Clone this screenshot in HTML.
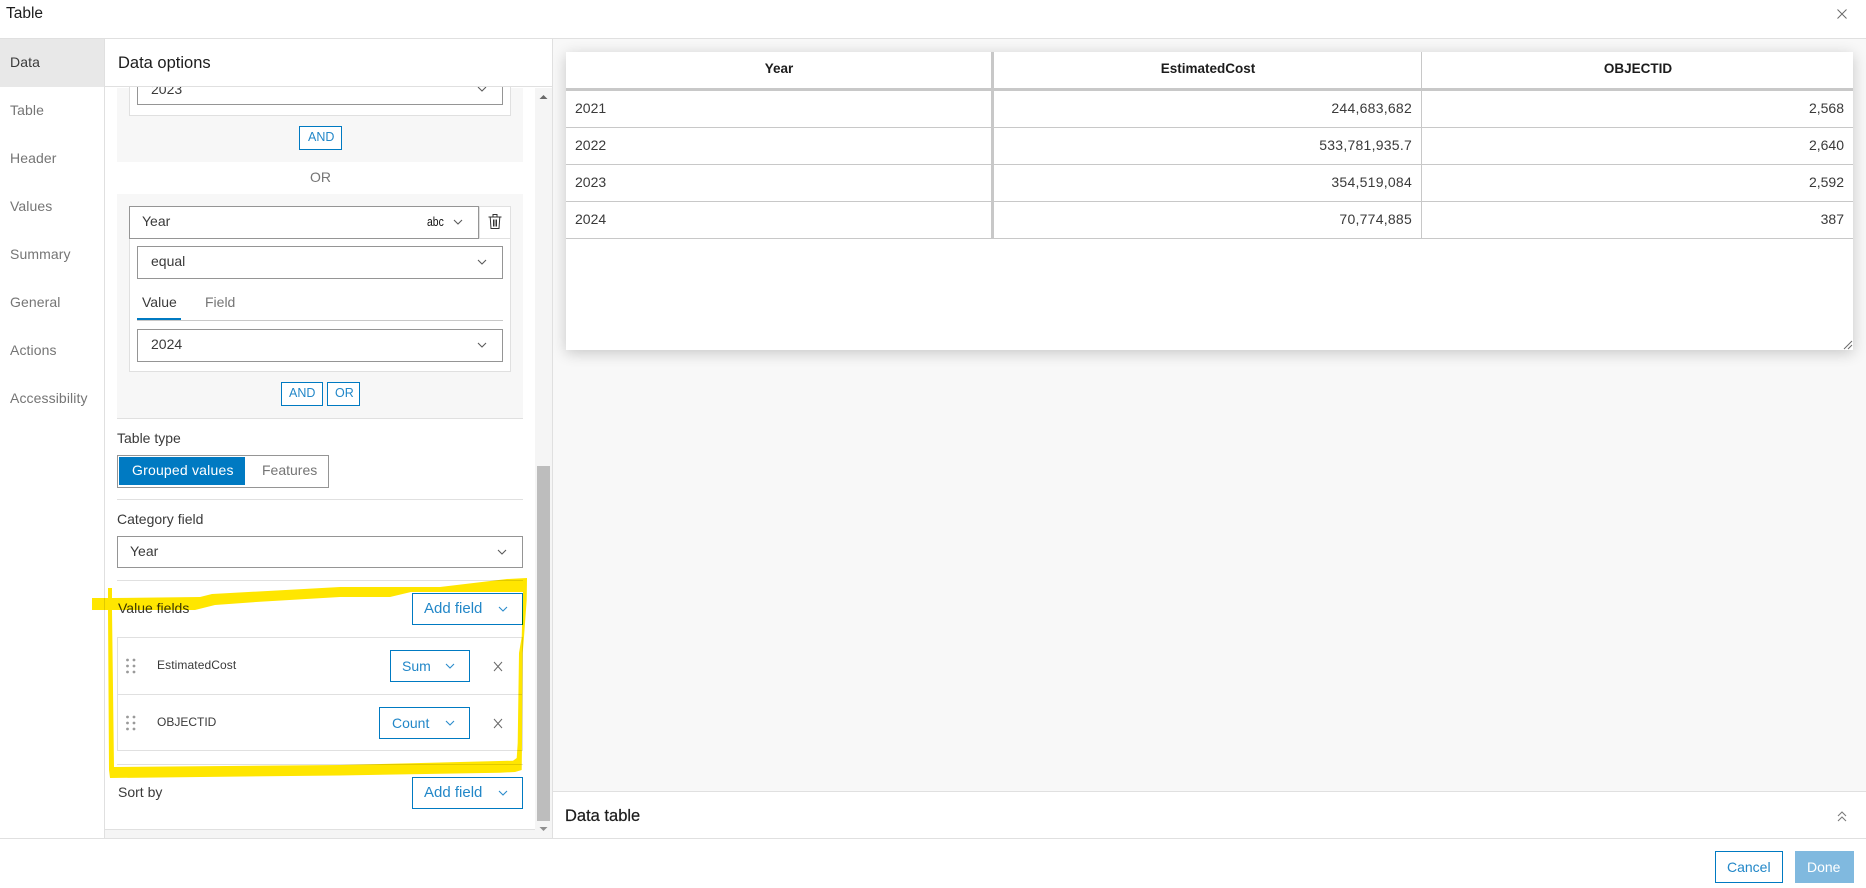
<!DOCTYPE html>
<html><head><meta charset="utf-8"><title>Table</title>
<style>
*{box-sizing:border-box}
html,body{margin:0;padding:0;background:#fff}
#r{position:relative;width:1866px;height:888px;overflow:hidden;background:#fff;font-family:"Liberation Sans",sans-serif;font-size:14px;color:#3a3a3a}
#r div,#r span.t,#r svg{position:absolute}
.t{line-height:20px;white-space:nowrap;display:block}
.n{color:#757575;left:10px;font-size:14px;letter-spacing:.1px}
.line{background:#e0e0e0;height:1px}
.sel{background:#fff;border:1px solid #959595}
.btn{background:#fff;border:1px solid #007ac2}
.b{color:#2287c8}
.c{fill:none;stroke:#5a5a5a;stroke-width:1.1}
.cb{fill:none;stroke:#2a8bcb;stroke-width:1.1}
.x{fill:none;stroke:#6a6a6a;stroke-width:1}
.h{font-weight:bold;font-size:13.5px;color:#1c1c1c;text-align:center;transform:translateX(-50%);top:59px}
.rv{text-align:right;font-size:14px}
.rv2{letter-spacing:.25px}
.dot{fill:#9a9a9a}
.af{font-size:15px}
</style></head><body>
<div id="r">
<span class="t" style="left:6px;top:4px;font-size:15.5px;color:#1c1c1c">Table</span>
<svg style="left:1837px;top:9px" width="10" height="10"><path class="x" d="M.5.5l9 9M9.5.5l-9 9"/></svg>
<div class="line" style="left:0;top:38px;width:1866px"></div>

<!-- right panel -->
<div style="left:553px;top:39px;width:1313px;height:752px;background:#f8f8f8"></div>
<div style="left:566px;top:52px;width:1287px;height:298px;background:#fff;box-shadow:0 3px 14px rgba(0,0,0,.2)"></div>
<div style="left:566px;top:88px;width:1287px;height:3px;background:#c8c8c8"></div>
<div style="left:566px;top:127px;width:1287px;height:1px;background:#c8c8c8"></div>
<div style="left:566px;top:164px;width:1287px;height:1px;background:#c8c8c8"></div>
<div style="left:566px;top:201px;width:1287px;height:1px;background:#c8c8c8"></div>
<div style="left:566px;top:238px;width:1287px;height:1px;background:#c8c8c8"></div>
<div style="left:991px;top:52px;width:3px;height:186px;background:#c8c8c8"></div>
<div style="left:1421px;top:52px;width:1px;height:186px;background:#c8c8c8"></div>
<span class="t h" style="left:779px">Year</span>
<span class="t h" style="left:1208px">EstimatedCost</span>
<span class="t h" style="left:1638px">OBJECTID</span>
<span class="t" style="left:575px;top:98px">2021</span>
<span class="t" style="left:575px;top:135px">2022</span>
<span class="t" style="left:575px;top:172px">2023</span>
<span class="t" style="left:575px;top:209px">2024</span>
<span class="t rv rv2" style="right:454px;top:98px">244,683,682</span>
<span class="t rv rv2" style="right:454px;top:135px">533,781,935.7</span>
<span class="t rv rv2" style="right:454px;top:172px">354,519,084</span>
<span class="t rv rv2" style="right:454px;top:209px">70,774,885</span>
<span class="t rv" style="right:22px;top:98px">2,568</span>
<span class="t rv" style="right:22px;top:135px">2,640</span>
<span class="t rv" style="right:22px;top:172px">2,592</span>
<span class="t rv" style="right:22px;top:209px">387</span>
<svg style="left:1843px;top:340px" width="10" height="10"><path d="M1 9l8-8M5 9l4-4" fill="none" stroke="#6a6a6a" stroke-width="1"/></svg>

<div class="line" style="left:553px;top:791px;width:1313px"></div>
<span class="t" style="left:565px;top:806px;font-size:16.5px;color:#1c1c1c;-webkit-text-stroke:.2px #1c1c1c">Data table</span>
<svg style="left:1836px;top:810px" width="12" height="13"><path d="M2 6l4-4 4 4M2 11l4-4 4 4" fill="none" stroke="#7a7a7a" stroke-width="1.1"/></svg>

<!-- nav -->
<div style="left:0;top:39px;width:104px;height:48px;background:#e8e8e8"></div>
<div class="line" style="left:104px;top:39px;width:1px;height:799px"></div>
<span class="t n" style="top:52px;color:#3a3a3a">Data</span>
<span class="t n" style="top:100px">Table</span>
<span class="t n" style="top:148px">Header</span>
<span class="t n" style="top:196px">Values</span>
<span class="t n" style="top:244px">Summary</span>
<span class="t n" style="top:292px">General</span>
<span class="t n" style="top:340px">Actions</span>
<span class="t n" style="top:388px">Accessibility</span>

<!-- left content -->
<div style="left:117px;top:88px;width:406px;height:74px;background:#f7f7f7"></div>
<div style="left:129px;top:70px;width:382px;height:46px;background:#fff;border:1px solid #e0e0e0"></div>
<div class="sel" style="left:137px;top:72px;width:366px;height:33px"></div>
<span class="t" style="left:151px;top:79px">2023</span>
<svg style="left:477px;top:86px" width="10" height="7"><path class="c" d="M1 1l4 4 4-4"/></svg>
<div class="btn" style="left:299px;top:126px;width:43px;height:24px"></div>
<span class="t b" style="left:308px;top:127px;font-size:12.5px">AND</span>
<span class="t" style="left:310px;top:167px;color:#757575">OR</span>

<div style="left:117px;top:194px;width:406px;height:224px;background:#f7f7f7"></div>
<div style="left:129px;top:238px;width:382px;height:134px;background:#fff;border:1px solid #e0e0e0"></div>
<div class="sel" style="left:129px;top:206px;width:350px;height:33px"></div>
<span class="t" style="left:142px;top:211px">Year</span>
<span class="t" style="left:427px;top:212px;font-size:13px;color:#111;transform:scaleX(.8);transform-origin:0 50%">abc</span>
<svg style="left:453px;top:219px" width="10" height="7"><path class="c" d="M1 1l4 4 4-4"/></svg>
<div style="left:479px;top:206px;width:32px;height:33px;background:#fff;border:1px solid #e0e0e0"></div>
<svg style="left:488px;top:213px" width="14" height="17"><path d="M.5 4h13M5 4V1.5h4V4M2.2 4l.8 11.5h8L11.8 4M5.500 6.500v7M7 6.500v7M8.500 6.500v7" fill="none" stroke="#333" stroke-width="1"/></svg>
<div class="sel" style="left:137px;top:246px;width:366px;height:33px"></div>
<span class="t" style="left:151px;top:251px">equal</span>
<svg style="left:477px;top:259px" width="10" height="7"><path class="c" d="M1 1l4 4 4-4"/></svg>
<span class="t" style="left:142px;top:292px">Value</span>
<span class="t" style="left:205px;top:292px;color:#757575">Field</span>
<div style="left:137px;top:320px;width:366px;height:1px;background:#c8c8c8"></div>
<div style="left:137px;top:318px;width:44px;height:2px;background:#007ac2"></div>
<div class="sel" style="left:137px;top:329px;width:366px;height:33px"></div>
<span class="t" style="left:151px;top:334px">2024</span>
<svg style="left:477px;top:342px" width="10" height="7"><path class="c" d="M1 1l4 4 4-4"/></svg>
<div class="btn" style="left:281px;top:382px;width:42px;height:24px"></div>
<span class="t b" style="left:289px;top:383px;font-size:12.5px">AND</span>
<div class="btn" style="left:327px;top:382px;width:33px;height:24px"></div>
<span class="t b" style="left:335px;top:383px;font-size:12.5px">OR</span>
<div class="line" style="left:117px;top:418px;width:406px"></div>

<span class="t" style="left:117px;top:428px">Table type</span>
<div class="sel" style="left:117px;top:455px;width:212px;height:33px"></div>
<div style="left:119px;top:457px;width:126px;height:28px;background:#007ac2"></div>
<span class="t" style="left:132px;top:460px;color:#fff;letter-spacing:.2px">Grouped values</span>
<span class="t" style="left:262px;top:460px;color:#757575">Features</span>
<div class="line" style="left:117px;top:499px;width:406px"></div>

<span class="t" style="left:117px;top:509px">Category field</span>
<div class="sel" style="left:117px;top:536px;width:406px;height:32px"></div>
<span class="t" style="left:130px;top:541px">Year</span>
<svg style="left:497px;top:549px" width="10" height="7"><path class="c" d="M1 1l4 4 4-4"/></svg>
<div class="line" style="left:117px;top:580px;width:406px"></div>

<span class="t" style="left:118px;top:598px">Value fields</span>
<div class="btn" style="left:412px;top:593px;width:111px;height:32px"></div>
<span class="t b af" style="left:424px;top:599px">Add field</span>
<svg style="left:498px;top:606px" width="10" height="7"><path class="cb" d="M1 1l4 4 4-4"/></svg>

<div style="left:117px;top:637px;width:406px;height:114px;border:1px solid #e0e0e0;background:#fff"></div>
<div class="line" style="left:117px;top:694px;width:406px"></div>
<svg style="left:125px;top:658px" width="12" height="16"><circle class="dot" cx="2.5" cy="2" r="1.4"/><circle class="dot" cx="9" cy="2" r="1.4"/><circle class="dot" cx="2.5" cy="8" r="1.4"/><circle class="dot" cx="9" cy="8" r="1.4"/><circle class="dot" cx="2.5" cy="14" r="1.4"/><circle class="dot" cx="9" cy="14" r="1.4"/></svg>
<svg style="left:125px;top:715px" width="12" height="16"><circle class="dot" cx="2.5" cy="2" r="1.4"/><circle class="dot" cx="9" cy="2" r="1.4"/><circle class="dot" cx="2.5" cy="8" r="1.4"/><circle class="dot" cx="9" cy="8" r="1.4"/><circle class="dot" cx="2.5" cy="14" r="1.4"/><circle class="dot" cx="9" cy="14" r="1.4"/></svg>
<span class="t" style="left:157px;top:655px;font-size:12px;letter-spacing:.1px">EstimatedCost</span>
<span class="t" style="left:157px;top:712px;font-size:12px">OBJECTID</span>
<div class="btn" style="left:390px;top:650px;width:80px;height:32px"></div>
<span class="t b" style="left:402px;top:656px">Sum</span>
<svg style="left:445px;top:663px" width="10" height="7"><path class="cb" d="M1 1l4 4 4-4"/></svg>
<svg style="left:493px;top:661px" width="10" height="11"><path class="x" d="M1 1l8 9M9 1l-8 9"/></svg>
<div class="btn" style="left:379px;top:707px;width:91px;height:32px"></div>
<span class="t b" style="left:392px;top:713px">Count</span>
<svg style="left:445px;top:720px" width="10" height="7"><path class="cb" d="M1 1l4 4 4-4"/></svg>
<svg style="left:493px;top:718px" width="10" height="11"><path class="x" d="M1 1l8 9M9 1l-8 9"/></svg>
<div class="line" style="left:117px;top:764px;width:406px"></div>

<span class="t" style="left:118px;top:782px">Sort by</span>
<div class="btn" style="left:412px;top:777px;width:111px;height:32px"></div>
<span class="t b af" style="left:424px;top:783px">Add field</span>
<svg style="left:498px;top:790px" width="10" height="7"><path class="cb" d="M1 1l4 4 4-4"/></svg>

<div style="left:105px;top:829px;width:447px;height:9px;background:#f5f5f5;border-top:1px solid #e0e0e0"></div>

<!-- scrollbar -->
<div style="left:535px;top:88px;width:17px;height:750px;background:#f5f5f5"></div>
<div style="left:537px;top:466px;width:13px;height:355px;background:#bdbdbd"></div>
<svg style="left:539px;top:94px" width="9" height="6"><path d="M4.5 1L8.5 5H.5z" fill="#6a6a6a"/></svg>
<svg style="left:539px;top:826px" width="9" height="6"><path d="M4.5 5L8.5 1H.5z" fill="#8f8f8f"/></svg>
<div class="line" style="left:552px;top:39px;width:1px;height:799px"></div>

<!-- options header -->
<div style="left:105px;top:39px;width:447px;height:48px;background:#fff;border-bottom:1px solid #e0e0e0"></div>
<span class="t" style="left:118px;top:53px;font-size:16.5px;color:#1c1c1c">Data options</span>

<!-- footer -->
<div class="line" style="left:0;top:838px;width:1866px"></div>
<div class="btn" style="left:1715px;top:851px;width:68px;height:32px"></div>
<span class="t b" style="left:1727px;top:857px">Cancel</span>
<div style="left:1795px;top:851px;width:59px;height:32px;background:#80b9df"></div>
<span class="t" style="left:1807px;top:857px;color:#fff">Done</span>

<!-- yellow highlight -->
<svg style="left:0;top:0;mix-blend-mode:multiply" width="1866" height="888"><path fill="#ffe600" fill-rule="evenodd" d="M92 598L108 598L108 588L112 588L112 598L200 597L212 594L340 587L440 587L507 579L527 578L526.700 600L524 637L522.700 653L522 743L521.700 770L515 772L500 772.700L340 775.500L110 778L109 770L108 610L92 610Z M112 610L195 610L215 605L260 601.700L340 597L390 597L411 592L523 592L521.700 637L519 653L517.700 743L516.700 758L513 760.700L340 765L114 767Z"/></svg>
</div>
</body></html>
